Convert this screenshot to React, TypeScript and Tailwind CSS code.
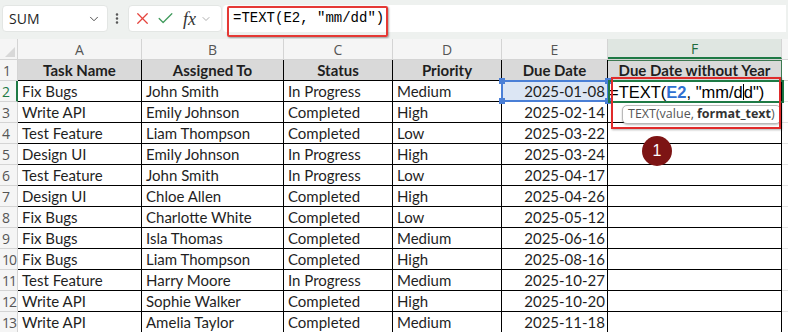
import React from 'react';
import { X, Check, ChevronDown, EllipsisVertical } from 'lucide-react';

const rows: [string, string, string, string, string][] = [
  ['Fix Bugs', 'John Smith', 'In Progress', 'Medium', '2025-01-08'],
  ['Write API', 'Emily Johnson', 'Completed', 'High', '2025-02-14'],
  ['Test Feature', 'Liam Thompson', 'Completed', 'Low', '2025-03-22'],
  ['Design UI', 'Emily Johnson', 'In Progress', 'High', '2025-03-24'],
  ['Test Feature', 'John Smith', 'In Progress', 'Low', '2025-04-17'],
  ['Design UI', 'Chloe Allen', 'Completed', 'High', '2025-04-26'],
  ['Fix Bugs', 'Charlotte White', 'Completed', 'Low', '2025-05-12'],
  ['Fix Bugs', 'Isla Thomas', 'Completed', 'Medium', '2025-06-16'],
  ['Fix Bugs', 'Liam Thompson', 'Completed', 'High', '2025-08-16'],
  ['Test Feature', 'Harry Moore', 'In Progress', 'Medium', '2025-10-27'],
  ['Write API', 'Sophie Walker', 'Completed', 'High', '2025-10-20'],
  ['Write API', 'Amelia Taylor', 'Completed', 'Medium', '2025-11-18'],
];

const widths = ['w-[124px]', 'w-[142px]', 'w-[109px]', 'w-[109px]', 'w-[106px]', 'w-[174px]'];
const letters = ['A', 'B', 'C', 'D', 'E', 'F'];
const headers = ['Task Name', 'Assigned To', 'Status', 'Priority', 'Due Date', 'Due Date without Year'];

export default function App() {
  return (
    <div className="w-[788px] h-[332px] overflow-hidden bg-white font-['Lato',sans-serif] text-[#1f1f1f]">
      {/* formula toolbar */}
      <div className="h-[39px] bg-[#eef1ef] flex items-start pt-[5px] px-[2px]">
        <div className="w-[106px] h-[27px] bg-white rounded-[4px] border border-[#e3e6e4] flex items-center justify-between pl-[6px] pr-[6px] font-['Open_Sans',sans-serif] text-[14px]">
          <span>SUM</span>
          <ChevronDown className="w-[14px] h-[14px] text-[#444]" strokeWidth={1.6} />
        </div>
        <EllipsisVertical className="w-[14px] h-[27px] ml-[2px] text-[#555]" strokeWidth={2.4} />
        <div className="w-[94px] h-[27px] ml-[4px] bg-white rounded-[4px] border border-[#e3e6e4] flex items-center gap-[4px] pl-[4px]">
          <X className="w-[19px] h-[19px] text-[#e5433d]" strokeWidth={1.6} />
          <Check className="w-[19px] h-[19px] text-[#3f9a5b]" strokeWidth={1.6} />
          <span className="font-['Liberation_Serif',serif] italic text-[18px] text-[#333] leading-none ml-[4px]">fx</span>
          <ChevronDown className="w-[12px] h-[12px] text-[#999]" strokeWidth={1.6} />
        </div>
        <div className="flex-1 h-[27px] ml-[1px] bg-white rounded-l-[4px] relative flex items-center pl-[10px]">
          <span className="font-['Liberation_Mono',monospace] text-[14px] text-black">=TEXT(E2, "mm/dd")</span>
          <div className="absolute left-[4px] top-[1px] w-[161px] h-[31px] border-2 border-[#e53935] rounded-[2px] shadow-[1px_1px_2px_rgba(0,0,0,0.35)]" />
        </div>
      </div>

      {/* grid */}
      <div className="relative">
        {/* column letters */}
        <div className="flex h-[21px] bg-[#f5f5f5] border-b border-[#d4d4d4] font-['Open_Sans',sans-serif] text-[14px] text-[#555]">
          <div className="w-[18px] border-r border-[#d4d4d4] relative">
            <div className="absolute right-[2px] bottom-[2px] w-0 h-0 border-l-[10px] border-l-transparent border-b-[10px] border-b-[#d8d8d8]" />
          </div>
          {letters.map((l, i) => (
            <div
              key={l}
              className={`${widths[i]} flex items-center justify-center border-r border-[#d4d4d4] ${
                l === 'F' ? 'bg-[#dfe6e1] text-[#1e6b3c] border-b-2 border-b-[#1e7a45]' : ''
              }`}
            >
              {l}
            </div>
          ))}
          <div className="flex-1" />
        </div>

        {/* header row */}
        <div className="flex h-[21px]">
          <div className="w-[18px] bg-[#f5f5f5] border-r border-b border-[#d4d4d4] text-[#555] text-[14px] font-['Open_Sans',sans-serif] flex items-center pl-[3px]">
            1
          </div>
          {headers.map((h, i) => (
            <div
              key={h}
              className={`${widths[i]} bg-[#d9d9d9] border-b border-black ${i < 5 ? 'border-r border-r-black' : 'border-r border-r-[#3d7a52] border-t border-t-[#3d7a52]'} flex items-center justify-center font-bold text-[15px] whitespace-nowrap`}
            >
              {h}
            </div>
          ))}
          <div className="flex-1 border-b border-[#d4d4d4]" />
        </div>

        {/* data rows */}
        {rows.map((r, ri) => {
          const rowNo = ri + 2;
          const active = rowNo === 2;
          return (
            <div key={ri} className="flex h-[21px]">
              <div
                className={`w-[18px] bg-[#f5f5f5] border-b border-[#d4d4d4] text-[14px] font-['Open_Sans',sans-serif] flex items-center pl-[2px] tracking-[-1px] ${
                  active ? 'text-[#1e7a45] border-r-2 border-r-[#1e7a45]' : 'text-[#555] border-r border-r-[#d4d4d4]'
                }`}
              >
                {rowNo}
              </div>
              {r.map((c, ci) => (
                <div
                  key={ci}
                  className={`${widths[ci]} border-r border-b border-black flex items-center text-[15px] whitespace-nowrap ${
                    ci === 4 ? 'justify-end pr-[2px]' : 'pl-[4px]'
                  } ${active && ci === 4 ? 'bg-[#dce6f4]' : ''}`}
                >
                  {c}
                </div>
              ))}
              <div className="w-[174px] border-r border-b border-black relative">
                {active && (
                  <span className="absolute left-[1px] top-[-1px] font-['Liberation_Sans',sans-serif] text-[16.5px] whitespace-nowrap text-black">
                    =TEXT(<span className="text-[#2f6fd0] font-bold">E2</span>, "mm/d
                    <span className="inline-block w-[1px] h-[16px] bg-black align-[-2px]" />
                    d")
                  </span>
                )}
              </div>
              <div className="flex-1 border-b border-[#e4e4e4]" />
            </div>
          );
        })}

        {/* E2 reference highlight */}
        <div className="absolute left-[501px] top-[41px] w-[108px] h-[22px] border-2 border-[#4a7fd6] pointer-events-none">
          <div className="absolute -left-[4px] -top-[4px] w-[6px] h-[6px] bg-[#4a7fd6]" />
          <div className="absolute -right-[4px] -top-[4px] w-[6px] h-[6px] bg-[#4a7fd6]" />
          <div className="absolute -left-[4px] -bottom-[4px] w-[6px] h-[6px] bg-[#4a7fd6]" />
          <div className="absolute -right-[4px] -bottom-[4px] w-[6px] h-[6px] bg-[#4a7fd6]" />
        </div>

        {/* active cell border */}
        <div className="absolute left-[608px] top-[41px] w-[176px] h-[23px] border-2 border-[#1e7a45] pointer-events-none" />

        {/* argument tooltip */}
        <div className="absolute left-[622px] top-[66px] h-[19px] px-[5px] bg-white border border-[#b9b9b9] rounded-[5px] shadow-[0_1px_2px_rgba(0,0,0,0.25)] flex items-center font-['Open_Sans',sans-serif] text-[12.5px] text-[#555] whitespace-nowrap">
          TEXT(value, <span className="font-bold ml-[3px] text-[#333]">format_text</span>)
        </div>

        {/* annotation box */}
        <div className="absolute left-[611px] top-[38px] w-[170px] h-[52px] border-2 border-[#e02b2b] shadow-[1px_1px_2px_rgba(0,0,0,0.3)] pointer-events-none" />

        {/* step marker */}
        <div className="absolute left-[642px] top-[97px] w-[30px] h-[30px] rounded-full bg-[#7d1414] text-white flex items-center justify-center font-['Liberation_Sans',sans-serif] text-[16px]">
          1
        </div>
      </div>
    </div>
  );
}
